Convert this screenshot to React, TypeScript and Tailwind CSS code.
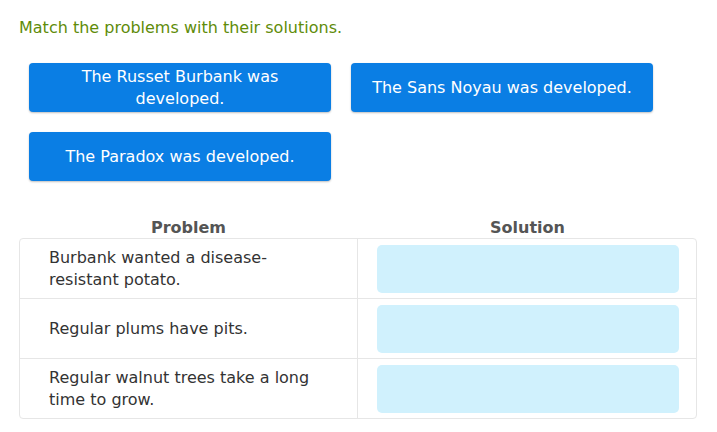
const cards = [
  { id: 'russet', text: 'The Russet Burbank was developed.' },
  { id: 'sans', text: 'The Sans Noyau was developed.' },
  { id: 'paradox', text: 'The Paradox was developed.' },
]

const problems = [
  'Burbank wanted a disease-resistant potato.',
  'Regular plums have pits.',
  'Regular walnut trees take a long time to grow.',
]

function Card({ text }: { text: string }) {
  return (
    <div className="w-[302px] h-[49px] flex items-center justify-center px-5 text-center rounded-[4px] bg-[#0a7ee4] text-white text-[16px] leading-[22px] shadow-[0_1px_2px_rgba(0,0,0,0.25)]">
      {text}
    </div>
  )
}

export default function App() {
  return (
    <div className="w-[717px] h-[432px] bg-white font-['DejaVu_Sans',Verdana,sans-serif] overflow-hidden">
      <div className="pt-[18px] pl-[19px] pr-[20px]">
        <p className="text-[16px] leading-[20px] text-[#5f8c0a]">Match the problems with their solutions.</p>

        <div className="mt-[25px] pl-[10px] flex flex-wrap gap-x-[20px] gap-y-[20px] w-[660px]">
          {cards.map((c) => (
            <Card key={c.id} text={c.text} />
          ))}
        </div>

        <div className="mt-[35px] w-[678px]">
          <div className="grid grid-cols-2 h-[22px] items-center text-[16px] font-bold text-[#555]">
            <div className="text-center">Problem</div>
            <div className="text-center">Solution</div>
          </div>
          <div className="border border-[#e6e6e6] rounded-[4px]">
            {problems.map((p, i) => (
              <div
                key={p}
                className={`grid grid-cols-2 ${i > 0 ? 'h-[60px] border-t border-[#e6e6e6]' : 'h-[59px]'}`}
              >
                <div className="flex items-center pl-[29px] pr-[30px] pt-[1px] text-[16px] leading-[22px] text-[#333] border-r border-[#e6e6e6]">
                  {p}
                </div>
                <div className="flex items-center pl-[19px]">
                  <div className="w-[302px] h-[48px] rounded-[5px] bg-[#d0f1fd]" />
                </div>
              </div>
            ))}
          </div>
        </div>
      </div>
    </div>
  )
}
